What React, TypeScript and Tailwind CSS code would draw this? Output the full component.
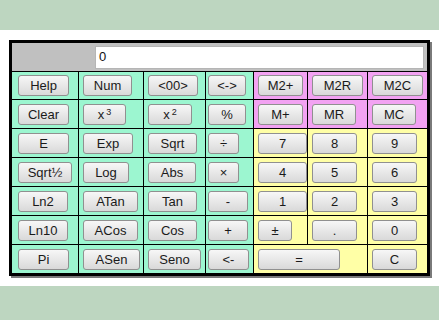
import type { ReactNode } from 'react'

type Cell = {
  label: ReactNode
  w: number
  tone: 'green' | 'pink' | 'yellow'
  span?: boolean
  pad?: string
}

const toneBg = {
  green: 'bg-[#9cf6d0]',
  pink: 'bg-[#f2a2f2]',
  yellow: 'bg-[#ffffa6]',
}

const sup = (base: string, n: string) => (
  <span>
    {base}
    <span className="relative -top-[4px] ml-[2px] text-[9px]">{n}</span>
  </span>
)

const rows: Cell[][] = [
  [
    { label: 'Help', w: 51, tone: 'green', pad: 'pl-[6px]' },
    { label: 'Num', w: 49, tone: 'green' },
    { label: '<00>', w: 50, tone: 'green' },
    { label: '<->', w: 38, tone: 'green', pad: 'pl-[2px]' },
    { label: 'M2+', w: 45, tone: 'pink' },
    { label: 'M2R', w: 51, tone: 'pink' },
    { label: 'M2C', w: 51, tone: 'pink' },
  ],
  [
    { label: 'Clear', w: 51, tone: 'green', pad: 'pl-[6px]' },
    { label: sup('x', '3'), w: 43, tone: 'green' },
    { label: sup('x', '2'), w: 44, tone: 'green' },
    { label: '%', w: 38, tone: 'green', pad: 'pl-[2px]' },
    { label: 'M+', w: 45, tone: 'pink' },
    { label: 'MR', w: 44, tone: 'pink' },
    { label: 'MC', w: 44, tone: 'pink' },
  ],
  [
    { label: 'E', w: 51, tone: 'green', pad: 'pl-[6px]' },
    { label: 'Exp', w: 50, tone: 'green' },
    { label: 'Sqrt', w: 49, tone: 'green' },
    { label: '÷', w: 31, tone: 'green', pad: 'pl-[2px]' },
    { label: '7', w: 49, tone: 'yellow' },
    { label: '8', w: 45, tone: 'yellow' },
    { label: '9', w: 45, tone: 'yellow' },
  ],
  [
    { label: 'Sqrt½', w: 54, tone: 'green', pad: 'pl-[6px]' },
    { label: 'Log', w: 46, tone: 'green' },
    { label: 'Abs', w: 48, tone: 'green' },
    { label: '×', w: 31, tone: 'green', pad: 'pl-[2px]' },
    { label: '4', w: 49, tone: 'yellow' },
    { label: '5', w: 45, tone: 'yellow' },
    { label: '6', w: 45, tone: 'yellow' },
  ],
  [
    { label: 'Ln2', w: 50, tone: 'green', pad: 'pl-[6px]' },
    { label: 'ATan', w: 55, tone: 'green' },
    { label: 'Tan', w: 49, tone: 'green' },
    { label: '-', w: 40, tone: 'green', pad: 'pl-[2px]' },
    { label: '1', w: 49, tone: 'yellow' },
    { label: '2', w: 45, tone: 'yellow' },
    { label: '3', w: 45, tone: 'yellow' },
  ],
  [
    { label: 'Ln10', w: 50, tone: 'green', pad: 'pl-[6px]' },
    { label: 'ACos', w: 55, tone: 'green' },
    { label: 'Cos', w: 49, tone: 'green' },
    { label: '+', w: 40, tone: 'green', pad: 'pl-[2px]' },
    { label: '±', w: 34, tone: 'yellow' },
    { label: '.', w: 45, tone: 'yellow' },
    { label: '0', w: 45, tone: 'yellow' },
  ],
  [
    { label: 'Pi', w: 51, tone: 'green', pad: 'pl-[6px]' },
    { label: 'ASen', w: 57, tone: 'green' },
    { label: 'Seno', w: 53, tone: 'green' },
    { label: '<-', w: 41, tone: 'green', pad: 'pl-[2px]' },
    { label: '=', w: 82, tone: 'yellow', span: true },
    { label: 'C', w: 45, tone: 'yellow' },
  ],
]

function Key({ label, w }: { label: ReactNode; w: number }) {
  return (
    <button
      className="h-[21px] rounded-[3px] border border-[#909090] bg-gradient-to-b from-[#f7f7f7] to-[#d9d9d9] text-[13px] leading-none text-[#1a1a1a]"
      style={{ width: w }}
    >
      {label}
    </button>
  )
}

export default function App() {
  return (
    <div className="h-[320px] w-[439px] bg-[#bdd6c0] pt-[30px] font-['Liberation_Sans',Arial,sans-serif]">
      <div className="h-[256px] bg-white pl-[9px] pt-[10px]">
        <div className="w-[421px] border-[3px] border-black shadow-[2px_2px_0_#7a7a7a]">
          <div className="grid grid-cols-[66px_64px_61px_47px_53px_59px_59px] grid-rows-[28px_27px_repeat(6,28px)] gap-px bg-black">
            <div className="col-span-7 flex items-center justify-end bg-[#c0c0c0] pr-[3px]">
              <div className="flex h-[23px] w-[329px] items-center border border-[#b5b5b5] bg-white pl-[3px] text-[13px] text-[#111]">
                0
              </div>
            </div>
            {rows.map((row, r) =>
              row.map((cell, c) => (
                <div
                  key={`${r}-${c}`}
                  className={`flex items-center ${cell.pad ?? 'pl-[4px]'} ${toneBg[cell.tone]} ${cell.span ? 'col-span-2' : ''}`}
                >
                  <Key label={cell.label} w={cell.w} />
                </div>
              )),
            )}
          </div>
        </div>
      </div>
    </div>
  )
}
